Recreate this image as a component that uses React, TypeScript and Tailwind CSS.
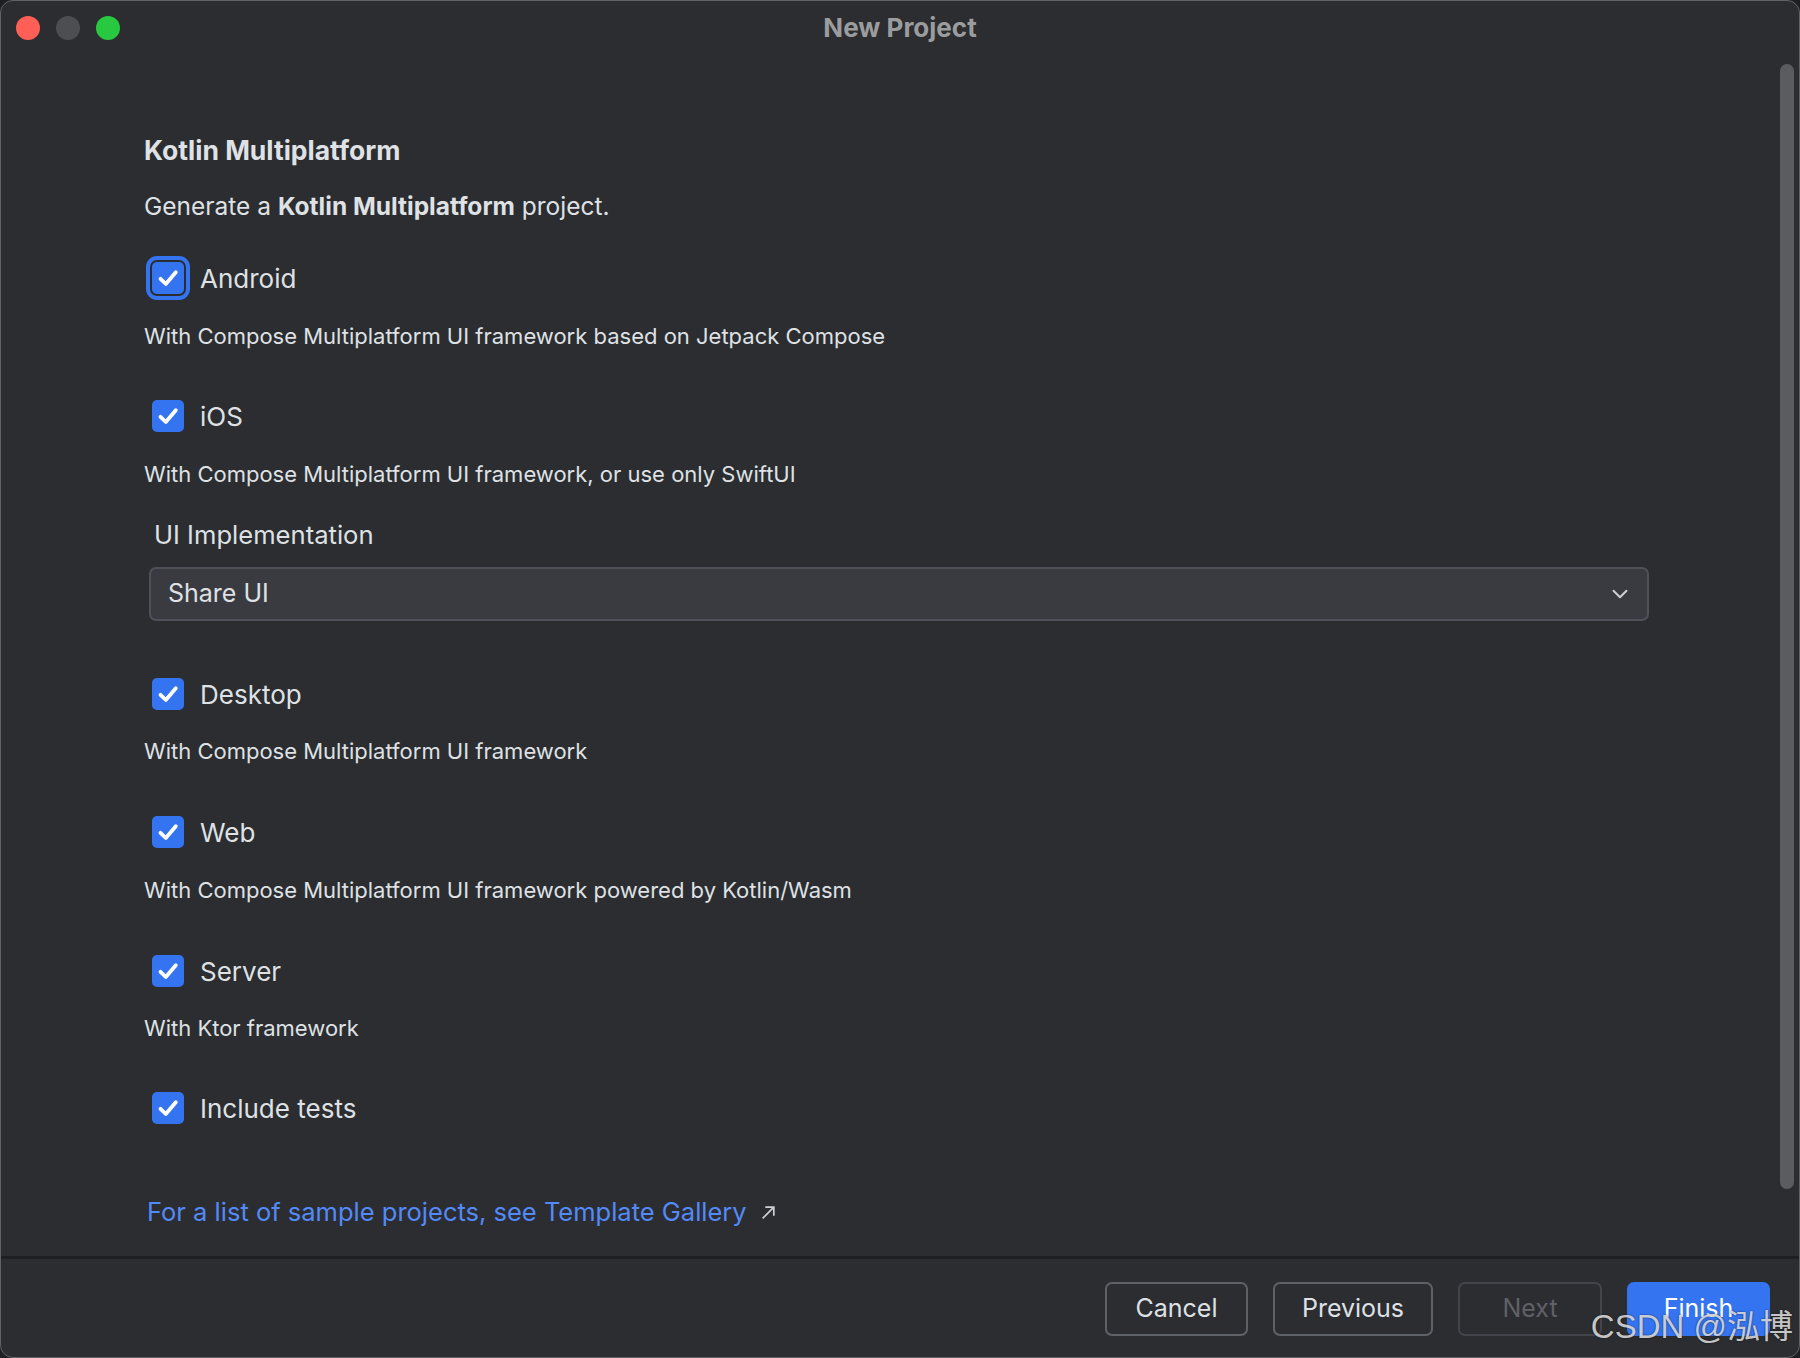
import { ChevronDown } from 'lucide-react'

const FONT = "font-['Inter','Noto_Sans',sans-serif]"

function CheckMark() {
  return (
    <svg viewBox="0 0 32 32" className="size-[32px]" aria-hidden="true">
      <path
        d="M8.5 16.8 L13.8 22 L23.8 10.2"
        fill="none"
        stroke="#ffffff"
        strokeWidth="3.8"
        strokeLinecap="round"
        strokeLinejoin="round"
      />
    </svg>
  )
}

function Checkbox({ focused }: { focused?: boolean }) {
  return (
    <span
      className={
        focused
          ? 'flex size-[32px] shrink-0 items-center justify-center rounded-[5px] bg-[#3574f0] outline-[4px] outline-solid outline-[#3574f0] outline-offset-[2px]'
          : 'flex size-[32px] shrink-0 items-center justify-center rounded-[5px] bg-[#3574f0]'
      }
    >
      <CheckMark />
    </span>
  )
}

function CheckRow({ label, focused, mt }: { label: string; focused?: boolean; mt: string }) {
  return (
    <div className={`${mt} flex h-[44px] items-center gap-[16px] pl-[8px]`}>
      <Checkbox focused={focused} />
      <span className="text-[26px] text-[#dfe1e5]">{label}</span>
    </div>
  )
}

function Description({ children, mt }: { children: string; mt: string }) {
  return (
    <p className={`${mt} flex h-[36px] items-center text-[22px] text-[#dfe1e5]`}>
      {children}
    </p>
  )
}

function FooterButton({
  children,
  variant = 'default',
  width,
}: {
  children: string
  variant?: 'default' | 'disabled' | 'primary'
  width: string
}) {
  const styles = {
    default: 'border-[#5e6166] text-[#dfe1e5]',
    disabled: 'border-[#43454a] text-[#5f6167]',
    primary: 'border-[#3574f0] bg-[#3574f0] text-white',
  }[variant]

  return (
    <button
      className={`${width} flex h-[54px] items-center justify-center rounded-[7px] border-2 text-[25px] ${styles}`}
    >
      {children}
    </button>
  )
}

export default function App() {
  return (
    <div className={`${FONT} h-[1358px] w-[1800px] bg-[#1e1f22]`}>
      <div className="relative flex h-full w-full flex-col overflow-hidden rounded-[13px] border border-[#616265] bg-[#2b2d30]">
        {/* Title bar */}
        <div className="flex h-[54px] shrink-0 items-center">
          <div className="flex w-[120px] items-center gap-[16px] pl-[15px]">
            <span className="size-[24px] rounded-full bg-[#ff5f57]" />
            <span className="size-[24px] rounded-full bg-[#4d4e51]" />
            <span className="size-[24px] rounded-full bg-[#28c840]" />
          </div>
          <div className="flex-1 pb-[2px] text-center text-[26px] font-bold text-[#9b9c9e]">
            New Project
          </div>
          <div className="w-[120px]" />
        </div>

        {/* Body */}
        <div className="flex flex-1">
          <div className="flex-1 pl-[143px] pt-[76px]">
            <h1 className="flex h-[40px] items-center text-[26.5px] font-bold text-[#dfe1e5]">
              Kotlin Multiplatform
            </h1>
            <p className="mt-[15px] flex h-[40px] items-center text-[24.5px] text-[#dfe1e5]">
              Generate a&nbsp;<span className="font-bold">Kotlin Multiplatform</span>&nbsp;project.
            </p>

            <CheckRow label="Android" focused mt="mt-[30px]" />
            <Description mt="mt-[18px]">
              With Compose Multiplatform UI framework based on Jetpack Compose
            </Description>

            <CheckRow label="iOS" mt="mt-[40px]" />
            <Description mt="mt-[18px]">
              With Compose Multiplatform UI framework, or use only SwiftUI
            </Description>

            <div className="mt-[25px] flex h-[36px] items-center pl-[10px] text-[25.6px] text-[#dfe1e5]">
              UI Implementation
            </div>
            <div className="ml-[5px] mt-[14px] flex h-[54px] w-[1500px] items-center justify-between rounded-[7px] border-2 border-[#4e5157] bg-[#393b40] pl-[17px] pr-[14px]">
              <span className="text-[25px] text-[#dfe1e5]">Share UI</span>
              <ChevronDown className="size-[26px] text-[#ced0d6]" strokeWidth={1.8} />
            </div>

            <CheckRow label="Desktop" mt="mt-[51px]" />
            <Description mt="mt-[17px]">With Compose Multiplatform UI framework</Description>

            <CheckRow label="Web" mt="mt-[41px]" />
            <Description mt="mt-[18px]">
              With Compose Multiplatform UI framework powered by Kotlin/Wasm
            </Description>

            <CheckRow label="Server" mt="mt-[41px]" />
            <Description mt="mt-[17px]">With Ktor framework</Description>

            <CheckRow label="Include tests" mt="mt-[40px]" />

            <div className="mt-[64px] flex h-[36px] items-center gap-[13px] pl-[3px]">
              <span className="text-[25.5px] text-[#548af7]">
                For a list of sample projects, see Template Gallery
              </span>
              <svg viewBox="0 0 16 16" className="size-[17px]" aria-hidden="true">
                <path
                  d="M2.5 13.5 L13 3 M5 3 H13 V11"
                  fill="none"
                  stroke="#ced0d6"
                  strokeWidth="1.6"
                />
              </svg>
            </div>
          </div>

          {/* Scrollbar */}
          <div className="mr-[5px] mt-[9px] h-[1125px] w-[14px] rounded-full bg-[#5b5c5f]" />
        </div>

        {/* Footer */}
        <div className="flex h-[101px] shrink-0 items-start justify-end gap-[25px] border-t-[3px] border-[#1e1f22] pr-[29px] pt-[23px]">
          <FooterButton width="w-[143px]">Cancel</FooterButton>
          <FooterButton width="w-[160px]">Previous</FooterButton>
          <FooterButton width="w-[144px]" variant="disabled">
            Next
          </FooterButton>
          <FooterButton width="w-[143px]" variant="primary">
            Finish
          </FooterButton>
        </div>

        {/* Watermark */}
        <div className="absolute bottom-[6px] right-[6px] font-['Liberation_Sans','Noto_Sans_CJK_SC',sans-serif] text-[33px] text-[#e6e6e6]/85 [text-shadow:0_0_2px_rgba(0,0,0,0.6)]">
          CSDN @泓博
        </div>
      </div>
    </div>
  )
}
